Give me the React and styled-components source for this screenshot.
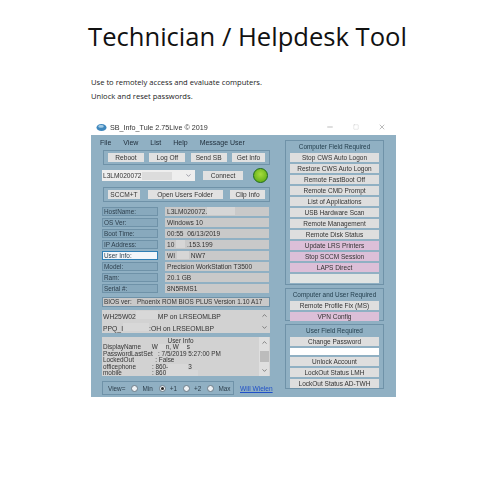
import React from "react";
import styled, { createGlobalStyle } from "styled-components";
import { ChevronUp, ChevronDown, Minus, Square, X } from "lucide-react";

const Global = createGlobalStyle`
  html, body { margin: 0; padding: 0; background: #fff; }
  body { font-family: "Liberation Sans", Arial, sans-serif; }
`;
const Page = styled.div`
  width: 495px; height: 495px; overflow: hidden; background: #fff;
  display: flex; flex-direction: column;
`;
const Heading = styled.h1`
  margin: 22px 0 0; height: 30px; font: 400 25.6px/30px "Open Sans", sans-serif;
  color: #111; text-align: center; white-space: nowrap;
`;
const Intro = styled.div`
  margin: 26px 0 0 91px; display: flex; flex-direction: column; gap: 6px;
  font: 400 7.6px/8px "Open Sans", sans-serif; color: #222;
`;
const Win = styled.div`
  margin: 19px 0 0 91px; width: 305px; height: 278px;
  background: #90b0c3; display: flex; flex-direction: column; filter: blur(0.4px);
`;
const TitleBar = styled.div`
  height: 16px; background: #fff; display: flex; align-items: center;
  padding: 0 10px 0 5px; gap: 3px; font-size: 7.2px; color: #333;
`;
const TitleText = styled.span`flex: 1;`;
const Controls = styled.div`
  display: flex; align-items: center; gap: 19px; color: #555;
`;
const Body = styled.div`display: flex; padding-left: 11px;`;
const Left = styled.div`width: 168px; flex-shrink: 0; display: flex; flex-direction: column;`;
const Right = styled.div`
  width: 99px; margin-left: 15px; padding-top: 5px; display: flex; flex-direction: column; gap: 3px;
`;
const Menu = styled.div`
  height: 15px; display: flex; align-items: center; gap: 12px; margin-left: -2px;
  font-size: 7px; color: #1f2d3a;
`;
const Group = styled.div`
  height: 15px; width: 167px; margin-left: 1px; margin-top: ${p => p.$mt || 0}px; box-sizing: border-box;
  border: 1px solid #6f92a8; display: flex; align-items: center; justify-content: space-between; padding: 0 4px;
`;
const Btn = styled.div`
  box-sizing: border-box; width: ${p => p.$w}px; height: 9px; background: #e1e1e1; color: #333;
  font-size: 6.6px; line-height: 9px; text-align: center; white-space: nowrap;
`;
const ComboRow = styled.div`
  margin-top: 5px; height: 11px; display: flex; align-items: center;
`;
const Combo = styled.div`
  width: 93px; height: 11px; background: #eee; box-sizing: border-box; padding-left: 1px;
  display: flex; align-items: center; font-size: 6.6px; color: #333; white-space: nowrap;
`;
const ComboGap = styled.span`flex: 1; text-align: right; padding-right: 3px; color: #667; display: flex; justify-content: flex-end;`;
const Redact = styled.span`
  display: inline-block; width: ${p => p.$w}px; height: ${p => p.$h || 8}px; background: ${p => p.$c || "#d6d6d6"};
  vertical-align: top; flex-shrink: 0;
`;
const ConnectBtn = styled(Btn)`margin-left: 8px;`;
const Led = styled.div`
  width: 15px; height: 15px; border-radius: 50%; margin-left: 10px; flex-shrink: 0; box-sizing: border-box;
  background: radial-gradient(circle at 50% 40%, #a6dc3c, #6cb51d 70%); border: 1px solid #1f6a1a;
  margin-top: 0;
`;
const Fields = styled.div`
  margin-top: 5px; display: grid; grid-template-columns: 56px 104px; column-gap: 7px; row-gap: 2px;
`;
const Label = styled.div`
  height: 9px; box-sizing: border-box; padding-left: 2px; font-size: 6.4px; line-height: 9px; color: #2c3e4c;
  background: ${p => (p.$active ? "#f2f6fa" : "#88a9bd")};
  outline: 1px solid ${p => (p.$active ? "#2f7fb5" : "#6f92a8")}; outline-offset: -1px;
`;
const Value = styled.div`
  height: 9px; background: #c9c9c9; padding-left: 2px; box-sizing: border-box; font-size: 6.6px; line-height: 9px; color: #333;
  white-space: pre; overflow: hidden;
`;
const Bios = styled.div`
  margin-top: 4px; height: 10px; background: #c9c9c9; border: 1px solid #6f92a8; box-sizing: border-box;
  font-size: 6.4px; line-height: 8px; padding-left: 1px; color: #333; white-space: pre;
`;
const ListBox = styled.div`
  margin-top: ${p => p.$mt}px; height: ${p => p.$h}px; background: #d2d2d2; display: flex; overflow: hidden;
`;
const ListText = styled.div`
  flex: 1; padding: 1px 1px; font-size: ${p => p.$fs}px; line-height: ${p => p.$lh}px; color: #333; white-space: pre;
`;
const Centered = styled.div`text-align: center;`;
const Scroll = styled.div`
  width: 10px; margin-right: 1px; display: flex; flex-direction: column; align-items: center; justify-content: space-between;
  padding: 2px 0; color: #444; background: ${p => (p.$track ? "#dfdfdf" : "transparent")};
`;
const Thumb = styled.div`width: 9px; height: 11px; background: #bcbcbc;`;
const Bottom = styled.div`margin-top: 5px; display: flex; align-items: center; height: 14px;`;
const RadioGroup = styled.div`
  width: 132px; height: 14px; box-sizing: border-box; border: 1px solid #6f92a8; display: flex; align-items: center;
  gap: 4px; padding-left: 5px; font-size: 6.4px; color: #2c3e4c; white-space: nowrap; flex-shrink: 0;
`;
const Radio = styled.span`
  width: 7px; height: 7px; border-radius: 50%; background: #eef2f5; border: 1px solid #6d7c87; box-sizing: border-box;
  display: inline-flex; align-items: center; justify-content: center; margin-left: 2px;
  &::after { content: ""; width: 3px; height: 3px; border-radius: 50%; background: ${p => (p.$on ? "#222" : "transparent")}; }
`;
const WLink = styled.span`
  margin-left: 6px; color: #2050c8; text-decoration: underline; font-size: 6.6px; white-space: nowrap;
`;
const Panel = styled.div`
  box-sizing: border-box; border: 1px solid #6f92a8; padding: 0 4px; display: flex; flex-direction: column; gap: 2px;
  height: ${p => p.$h}px;
`;
const PanelTitle = styled.div`
  height: 9px; margin-top: 1px; text-align: center; font-size: 6.4px; line-height: 9px; color: #25404f; white-space: nowrap;
`;
const SideBtn = styled.div`
  height: 9px; text-align: center; font-size: 6.5px; line-height: 9px; color: #333; white-space: nowrap;
  background: ${p => ({ pink: "#dcbfd8", white: "#fff", pale: "#e0e4e3" }[p.$v] || "#dedede")};
`;

const fields = [
  ["HostName:", <>L3LM020072.<Redact $w={28} /></>],
  ["OS Ver:", "Windows 10"],
  ["Boot Time:", "00:55  06/13/2019"],
  ["IP Address:", <>10 <Redact $w={9} /> .153.199</>],
  ["User Info:", <>WI <Redact $w={12} /> NW7</>, true],
  ["Model:", "Precision WorkStation T3500"],
  ["Ram:", "20.1 GB"],
  ["Serial #:", "8N5RMS1"],
];
const group1 = [
  ["Stop CWS Auto Logon"], ["Restore CWS Auto Logon"], ["Remote FastBoot Off"], ["Remote CMD Prompt"],
  ["List of Applications"], ["USB Hardware Scan"], ["Remote Management"], ["Remote Disk Status"],
  ["Update LRS Printers", "pink"], ["Stop SCCM Session", "pink"], ["LAPS Direct", "pink"],
];

export default function App() {
  return (
    <Page>
      <Global />
      <Heading>Technician / Helpdesk Tool</Heading>
      <Intro>
        <span>Use to remotely access and evaluate computers.</span>
        <span>Unlock and reset passwords.</span>
      </Intro>
      <Win>
        <TitleBar>
          <svg width="11" height="9" viewBox="0 0 11 9">
            <ellipse cx="5.5" cy="4.5" rx="5" ry="3.6" fill="#3f87bd" />
            <ellipse cx="5" cy="3.4" rx="2.8" ry="1.3" fill="#a5cbe4" />
          </svg>
          <TitleText>SB_Info_Tule 2.75Live © 2019</TitleText>
          <Controls>
            <Minus size={8} strokeWidth={1.2} />
            <Square size={6} strokeWidth={1} color="#aaa" />
            <X size={8} strokeWidth={1.2} />
          </Controls>
        </TitleBar>
        <Body>
          <Left>
            <Menu>
              <span>File</span><span>View</span><span>List</span><span>Help</span><span>Message User</span>
            </Menu>
            <Group>
              <Btn $w={36}>Reboot</Btn><Btn $w={36}>Log Off</Btn><Btn $w={36}>Send SB</Btn><Btn $w={33}>Get Info</Btn>
            </Group>
            <ComboRow>
              <Combo>
                L3LM020072<Redact $w={30} $c="#dcdcdc" />
                <ComboGap><ChevronDown size={7} /></ComboGap>
              </Combo>
              <ConnectBtn $w={40}>Connect</ConnectBtn>
              <Led />
            </ComboRow>
            <Group $mt={6}>
              <Btn $w={32}>SCCM+T</Btn><Btn $w={75}>Open Users Folder</Btn><Btn $w={35}>Clip Info</Btn>
            </Group>
            <Fields>
              {fields.map(([l, v, active]) => (
                <React.Fragment key={l}>
                  <Label $active={active}>{l}</Label>
                  <Value>{v}</Value>
                </React.Fragment>
              ))}
            </Fields>
            <Bios>BIOS ver:   Phoenix ROM BIOS PLUS Version 1.10 A17</Bios>
            <ListBox $mt={3} $h={23}>
              <ListText $fs={6.8} $lh={12}>
                <div>WH25W02<Redact $w={22} $c="#d8d8d8" />MP on LRSEOMLBP</div>
                <div>PPQ_I<Redact $w={26} $c="#d8d8d8" />:OH on LRSEOMLBP</div>
              </ListText>
              <Scroll><ChevronUp size={7} /><ChevronDown size={7} /></Scroll>
            </ListBox>
            <ListBox $mt={4} $h={39}>
              <ListText $fs={6.4} $lh={6.4}>
                <Centered>User Info</Centered>
                <div>DisplayName      W<Redact $w={8} $h={6} $c="#d8d8d8" />n, W<Redact $w={8} $h={6} $c="#d8d8d8" />s</div>
                <div>PasswordLastSet   : 7/5/2019 5:27:00 PM</div>
                <div>LockedOut            : False</div>
                <div>officephone         : 860-<Redact $w={20} $h={6} $c="#d8d8d8" />3</div>
                <div>mobile                 : 860<Redact $w={32} $h={6} $c="#d8d8d8" /></div>
              </ListText>
              <Scroll $track><ChevronUp size={7} /><Thumb /><ChevronDown size={7} /></Scroll>
            </ListBox>
            <Bottom>
              <RadioGroup>
                View=<Radio />Min <Radio $on />+1 <Radio />+2 <Radio />Max
              </RadioGroup>
              <WLink>Will Wielen</WLink>
            </Bottom>
          </Left>
          <Right>
            <Panel $h={145}>
              <PanelTitle>Computer Field Required</PanelTitle>
              {group1.map(([t, v]) => <SideBtn key={t} $v={v}>{t}</SideBtn>)}
              <SideBtn $v="pale" />
            </Panel>
            <Panel $h={33}>
              <PanelTitle>Computer and User Required</PanelTitle>
              <SideBtn>Remote Profile Fix (MS)</SideBtn>
              <SideBtn $v="pink">VPN Config</SideBtn>
            </Panel>
            <Panel $h={65}>
              <PanelTitle>User Field Required</PanelTitle>
              <SideBtn>Change Password</SideBtn>
              <SideBtn $v="white" />
              <SideBtn>Unlock Account</SideBtn>
              <SideBtn>LockOut Status LMH</SideBtn>
              <SideBtn>LockOut Status AD-TWH</SideBtn>
            </Panel>
          </Right>
        </Body>
      </Win>
    </Page>
  );
}
